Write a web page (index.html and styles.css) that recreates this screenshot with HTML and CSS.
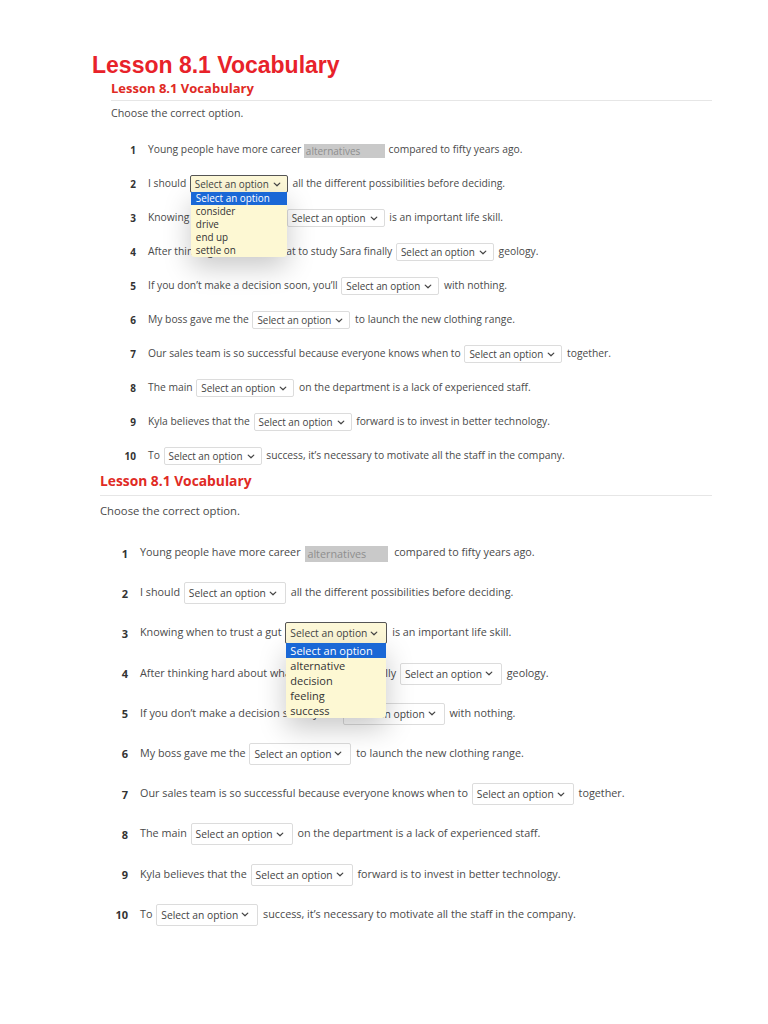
FILE: index.html
```html
<!DOCTYPE html>
<html lang="en">
<head>
<meta charset="utf-8">
<title>Lesson 8.1 Vocabulary</title>
<link rel="stylesheet" href="styles.css">
</head>
<body>
<h1 class="title">Lesson 8.1 Vocabulary</h1>

<section class="block block-a">
  <h2 class="block-head">Lesson 8.1 Vocabulary</h2>
  <p class="instr">Choose the correct option.</p>
  <ol class="items">
    <li class="item"><span class="num">1</span><span class="text">Young people have more career <span class="gap">alternatives</span> compared to fifty years ago.</span></li>
    <li class="item"><span class="num">2</span><span class="text">I should <span class="sel open">Select an option<svg class="chev" viewBox="0 0 10 6"><path d="M1.5 1.2 5 4.6 8.5 1.2"/></svg><span class="menu"><span class="opt hl">Select an option</span><span class="opt">consider</span><span class="opt">drive</span><span class="opt">end up</span><span class="opt">settle on</span></span></span> all the different possibilities before deciding.</span></li>
    <li class="item"><span class="num">3</span><span class="text">Knowing when to trust a gut <span class="sel">Select an option<svg class="chev" viewBox="0 0 10 6"><path d="M1.5 1.2 5 4.6 8.5 1.2"/></svg></span> is an important life skill.</span></li>
    <li class="item"><span class="num">4</span><span class="text">After thinking hard about what to study Sara finally <span class="sel">Select an option<svg class="chev" viewBox="0 0 10 6"><path d="M1.5 1.2 5 4.6 8.5 1.2"/></svg></span> geology.</span></li>
    <li class="item"><span class="num">5</span><span class="text">If you don’t make a decision soon, you’ll <span class="sel">Select an option<svg class="chev" viewBox="0 0 10 6"><path d="M1.5 1.2 5 4.6 8.5 1.2"/></svg></span> with nothing.</span></li>
    <li class="item"><span class="num">6</span><span class="text">My boss gave me the <span class="sel">Select an option<svg class="chev" viewBox="0 0 10 6"><path d="M1.5 1.2 5 4.6 8.5 1.2"/></svg></span> to launch the new clothing range.</span></li>
    <li class="item"><span class="num">7</span><span class="text">Our sales team is so successful because everyone knows when to <span class="sel">Select an option<svg class="chev" viewBox="0 0 10 6"><path d="M1.5 1.2 5 4.6 8.5 1.2"/></svg></span> together.</span></li>
    <li class="item"><span class="num">8</span><span class="text">The main <span class="sel">Select an option<svg class="chev" viewBox="0 0 10 6"><path d="M1.5 1.2 5 4.6 8.5 1.2"/></svg></span> on the department is a lack of experienced staff.</span></li>
    <li class="item"><span class="num">9</span><span class="text">Kyla believes that the <span class="sel">Select an option<svg class="chev" viewBox="0 0 10 6"><path d="M1.5 1.2 5 4.6 8.5 1.2"/></svg></span> forward is to invest in better technology.</span></li>
    <li class="item"><span class="num">10</span><span class="text">To <span class="sel">Select an option<svg class="chev" viewBox="0 0 10 6"><path d="M1.5 1.2 5 4.6 8.5 1.2"/></svg></span> success, it’s necessary to motivate all the staff in the company.</span></li>
  </ol>
</section>

<section class="block block-b">
  <h2 class="block-head">Lesson 8.1 Vocabulary</h2>
  <p class="instr">Choose the correct option.</p>
  <ol class="items">
    <li class="item"><span class="num">1</span><span class="text">Young people have more career <span class="gap">alternatives</span> compared to fifty years ago.</span></li>
    <li class="item"><span class="num">2</span><span class="text">I should <span class="sel">Select an option<svg class="chev" viewBox="0 0 10 6"><path d="M1.5 1.2 5 4.6 8.5 1.2"/></svg></span> all the different possibilities before deciding.</span></li>
    <li class="item"><span class="num">3</span><span class="text">Knowing when to trust a gut <span class="sel open">Select an option<svg class="chev" viewBox="0 0 10 6"><path d="M1.5 1.2 5 4.6 8.5 1.2"/></svg><span class="menu"><span class="opt hl">Select an option</span><span class="opt">alternative</span><span class="opt">decision</span><span class="opt">feeling</span><span class="opt">success</span></span></span> is an important life skill.</span></li>
    <li class="item"><span class="num">4</span><span class="text">After thinking hard about what to study Sara finally <span class="sel">Select an option<svg class="chev" viewBox="0 0 10 6"><path d="M1.5 1.2 5 4.6 8.5 1.2"/></svg></span> geology.</span></li>
    <li class="item"><span class="num">5</span><span class="text">If you don’t make a decision soon, you’ll <span class="sel">Select an option<svg class="chev" viewBox="0 0 10 6"><path d="M1.5 1.2 5 4.6 8.5 1.2"/></svg></span> with nothing.</span></li>
    <li class="item"><span class="num">6</span><span class="text">My boss gave me the <span class="sel">Select an option<svg class="chev" viewBox="0 0 10 6"><path d="M1.5 1.2 5 4.6 8.5 1.2"/></svg></span> to launch the new clothing range.</span></li>
    <li class="item"><span class="num">7</span><span class="text">Our sales team is so successful because everyone knows when to <span class="sel">Select an option<svg class="chev" viewBox="0 0 10 6"><path d="M1.5 1.2 5 4.6 8.5 1.2"/></svg></span> together.</span></li>
    <li class="item"><span class="num">8</span><span class="text">The main <span class="sel">Select an option<svg class="chev" viewBox="0 0 10 6"><path d="M1.5 1.2 5 4.6 8.5 1.2"/></svg></span> on the department is a lack of experienced staff.</span></li>
    <li class="item"><span class="num">9</span><span class="text">Kyla believes that the <span class="sel">Select an option<svg class="chev" viewBox="0 0 10 6"><path d="M1.5 1.2 5 4.6 8.5 1.2"/></svg></span> forward is to invest in better technology.</span></li>
    <li class="item"><span class="num">10</span><span class="text">To <span class="sel">Select an option<svg class="chev" viewBox="0 0 10 6"><path d="M1.5 1.2 5 4.6 8.5 1.2"/></svg></span> success, it’s necessary to motivate all the staff in the company.</span></li>
  </ol>
</section>
</body>
</html>
```

FILE: styles.css
```css
* { box-sizing: border-box; }
html, body { margin: 0; padding: 0; background: #fff; }
body {
  font-family: "Open Sans", "Noto Sans", sans-serif;
  color: #4a4a4a;
  padding-top: 52px;
}

.title {
  margin: 0 0 0 92px;
  font-family: "Liberation Sans", Arial, sans-serif;
  font-weight: bold;
  font-size: 23px;
  line-height: 26px;
  color: #e8222a;
}

.block { position: relative; }

.block-head {
  margin: 0;
  font-weight: 700;
  color: #e02a24;
  border-bottom: 1px solid #e6e6e6;
}

.instr { margin: 0; }

.items {
  list-style: none;
  margin: 0;
  padding: 0;
  display: flex;
  flex-direction: column;
}

.item {
  display: flex;
  align-items: center;
}

.num {
  font-weight: 700;
  color: #333;
  text-align: right;
  flex: none;
}

.text { white-space: nowrap; }

.gap {
  display: inline-block;
  vertical-align: middle;
  background: #c9c9c9;
  color: #8e8e8e;
  padding: 0 2px;
}

.sel {
  position: relative;
  display: inline-flex;
  align-items: center;
  justify-content: space-between;
  vertical-align: middle;
  background: #fff;
  border: 1px solid #dcdcdc;
  border-radius: 2px;
  color: #444;
}

.sel.open {
  background: #fdf8d8;
  border-color: #555;
}

.chev {
  fill: none;
  stroke: #444;
  stroke-width: 1.5;
  stroke-linecap: round;
  stroke-linejoin: round;
  flex: none;
}

.menu {
  position: absolute;
  top: 100%;
  left: 0;
  right: 0;
  display: flex;
  flex-direction: column;
  background: #fdf8d3;
  border-radius: 0 0 4px 4px;
  box-shadow: 0 10px 28px rgba(0, 0, 0, 0.22);
  z-index: 5;
  overflow: hidden;
}

.opt { color: #333; white-space: nowrap; }
.opt.hl { background: #1a68d6; color: #fff; }

/* ---- block A (smaller) ---- */
.block-a {
  margin: 2px 56px 0 111px;
  font-size: 10px;
}
.block-a .block-head {
  font-size: 13px;
  line-height: 16px;
  padding-bottom: 4px;
}
.block-a .instr {
  font-size: 10.7px;
  line-height: 14px;
  margin-top: 5px;
}
.block-a .items { gap: 16px; margin-top: 21px; }
.block-a .item { height: 18px; }
.block-a .num { width: 25px; margin-right: 12px; font-size: 10px; }
.block-a .text { font-size: 10.3px; }
.block-a .gap { width: 81px; height: 14px; line-height: 14px; margin: 0 1px 0 0; font-size: 10px; }
.block-a .sel { width: 98px; height: 18px; padding: 0 6px 0 4px; margin: 0 2px 0 1px; font-size: 9.9px; }
.block-a .chev { width: 8px; height: 5px; }
.block-a .opt { height: 13px; line-height: 13px; padding: 0 5px; font-size: 9.9px; }

/* ---- block B (larger) ---- */
.block-b {
  margin: 7px 56px 0 100px;
  font-size: 11px;
}
.block-b .block-head {
  font-size: 13.8px;
  line-height: 18px;
  padding-bottom: 5px;
}
.block-b .instr {
  font-size: 11.3px;
  line-height: 16px;
  margin-top: 7px;
}
.block-b .items { gap: 18.2px; margin-top: 23px; }
.block-b .item { height: 22px; }
.block-b .num { width: 28px; margin-right: 12px; font-size: 11px; }
.block-b .text { font-size: 10.8px; }
.block-b .gap { width: 83px; height: 16px; line-height: 16px; margin: 0 3px 0 2px; font-size: 10.8px; }
.block-b .sel { width: 102px; height: 22px; padding: 0 8px 0 4px; margin: 0 2px 0 1px; font-size: 10.3px; }
.block-b .chev { width: 8px; height: 5px; }
.block-b .opt { height: 15px; line-height: 15px; padding: 0 4px; font-size: 11px; }
```
